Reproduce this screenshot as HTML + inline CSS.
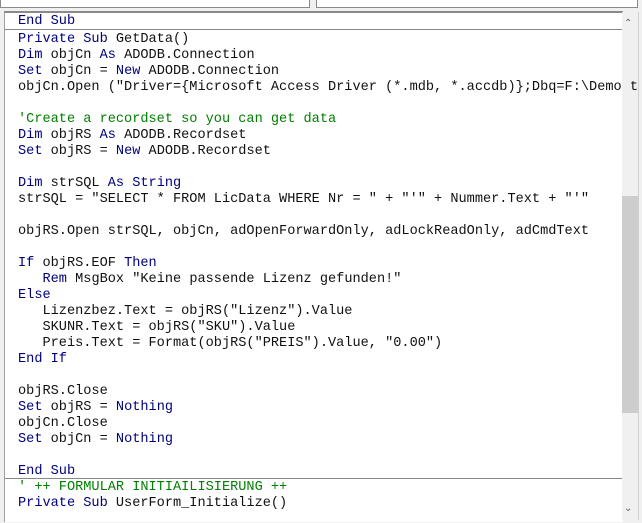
<!DOCTYPE html><html><head><style>
body{margin:0;width:642px;height:523px;background:#f0f0f0;position:relative;overflow:hidden;font-family:"Liberation Mono","Courier New",monospace;font-size:13.6px}
.cb{position:absolute;top:0;height:7px;background:#fff;border:1px solid #8a8a8a;border-top:none}
#ed{position:absolute;left:4px;top:11px;width:618px;height:509px;background:#fff;border-top:2px solid #8a8a8a;border-left:1px solid #a0a0a0}
#tx{position:absolute;left:5px;top:15px;width:0;height:0;z-index:5}
.l{position:absolute;left:13px;height:16px;line-height:16px;white-space:pre;color:#111}
.k{color:#00007f}.c{color:#007f00}
.sep{position:absolute;left:5px;width:617px;height:1px;background:#888}
#sb{position:absolute;left:622px;top:12px;width:16px;height:508px;background:#f0f0f0}
#th{position:absolute;left:622px;top:196px;width:16px;height:217px;background:#cdcdcd}
</style></head><body>
<div class="cb" style="left:0;width:308px"></div>
<div class="cb" style="left:316px;width:320px"></div>
<div id="ed"></div>
<div id="sb"></div><div id="th"></div>
<div class="sep" style="top:29px"></div>
<div class="sep" style="top:478px"></div>
<div id="tx">
<div class="l k" style="top:-1px">End Sub</div>
<div class="l" style="top:17px"><span class="k">Private Sub</span> GetData()</div>
<div class="l" style="top:33px"><span class="k">Dim</span> objCn <span class="k">As</span> ADODB.Connection</div>
<div class="l" style="top:49px"><span class="k">Set</span> objCn = <span class="k">New</span> ADODB.Connection</div>
<div class="l" style="top:65px">objCn.Open ("Driver={Microsoft Access Driver (*.mdb, *.accdb)};Dbq=F:\Demo t</div>
<div class="l c" style="top:97px">'Create a recordset so you can get data</div>
<div class="l" style="top:113px"><span class="k">Dim</span> objRS <span class="k">As</span> ADODB.Recordset</div>
<div class="l" style="top:129px"><span class="k">Set</span> objRS = <span class="k">New</span> ADODB.Recordset</div>
<div class="l" style="top:161px"><span class="k">Dim</span> strSQL <span class="k">As String</span></div>
<div class="l" style="top:177px">strSQL = "SELECT * FROM LicData WHERE Nr = " + "'" + Nummer.Text + "'"</div>
<div class="l" style="top:209px">objRS.Open strSQL, objCn, adOpenForwardOnly, adLockReadOnly, adCmdText</div>
<div class="l" style="top:241px"><span class="k">If</span> objRS.EOF <span class="k">Then</span></div>
<div class="l" style="top:257px">   <span class="k">Rem</span> MsgBox "Keine passende Lizenz gefunden!"</div>
<div class="l k" style="top:273px">Else</div>
<div class="l" style="top:289px">   Lizenzbez.Text = objRS("Lizenz").Value</div>
<div class="l" style="top:305px">   SKUNR.Text = objRS("SKU").Value</div>
<div class="l" style="top:321px">   Preis.Text = Format(objRS("PREIS").Value, "0.00")</div>
<div class="l k" style="top:337px">End If</div>
<div class="l" style="top:369px">objRS.Close</div>
<div class="l" style="top:385px"><span class="k">Set</span> objRS = <span class="k">Nothing</span></div>
<div class="l" style="top:401px">objCn.Close</div>
<div class="l" style="top:417px"><span class="k">Set</span> objCn = <span class="k">Nothing</span></div>
<div class="l k" style="top:449px">End Sub</div>
<div class="l c" style="top:465px">' ++ FORMULAR INITIAILISIERUNG ++</div>
<div class="l" style="top:481px"><span class="k">Private Sub</span> UserForm_Initialize()</div>
</div>
<div style="position:absolute;left:624px;top:18px;font:10px 'DejaVu Sans';color:#606060">&#8963;</div>
<div style="position:absolute;left:624px;top:503px;font:10px 'DejaVu Sans';color:#606060">&#8964;</div>
<div style="position:absolute;left:638px;top:12px;width:1px;height:508px;background:#d0d0d0"></div>
</body></html>
